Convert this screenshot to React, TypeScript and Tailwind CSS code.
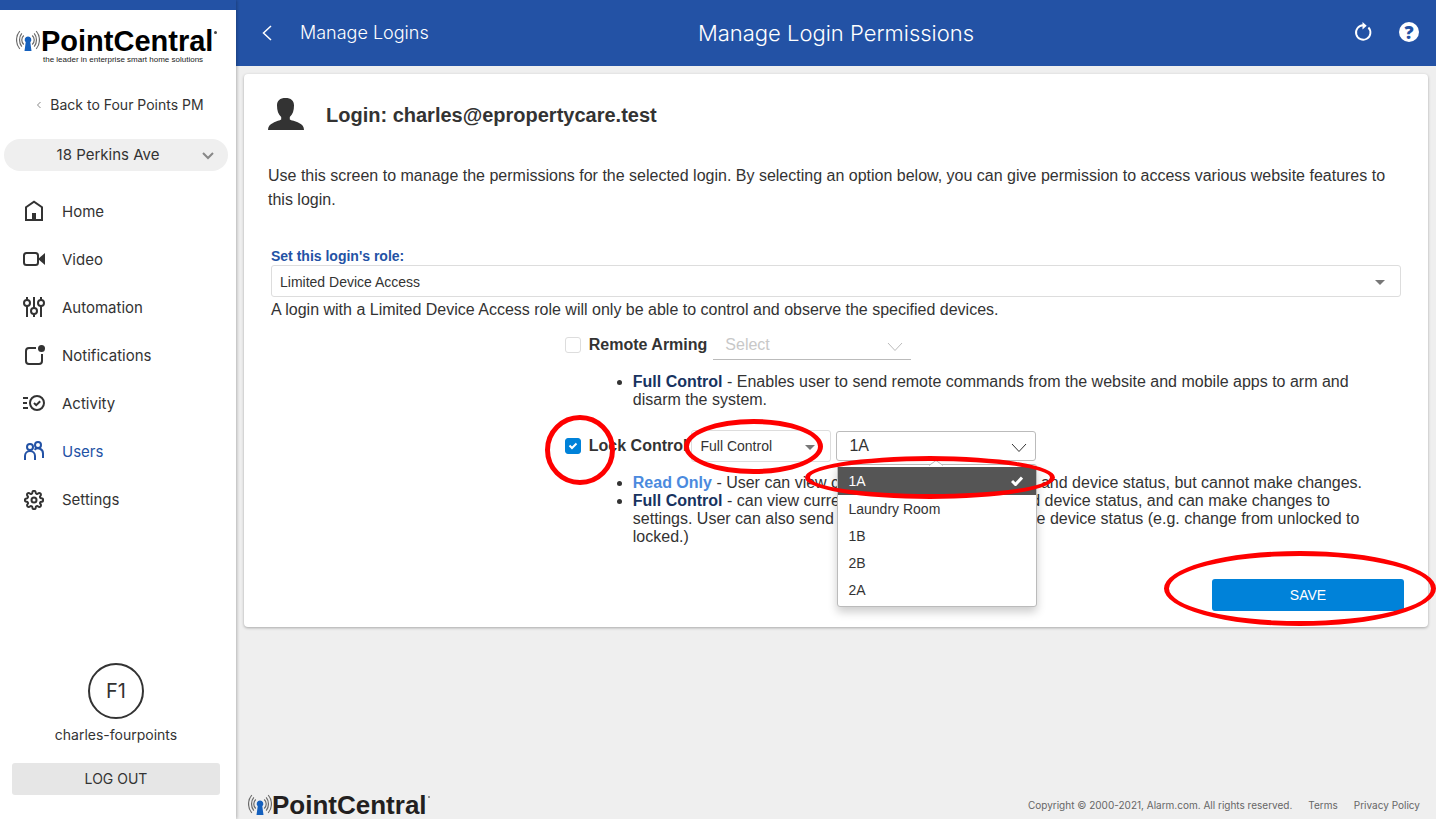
import type { ReactNode } from 'react'
import { FiSettings } from 'react-icons/fi'

const navItems = [
  { id: 'home', label: 'Home', icon: <HomeIcon /> },
  { id: 'video', label: 'Video', icon: <VideoIcon /> },
  { id: 'automation', label: 'Automation', icon: <AutomationIcon /> },
  { id: 'notifications', label: 'Notifications', icon: <NotificationsIcon /> },
  { id: 'activity', label: 'Activity', icon: <ActivityIcon /> },
  { id: 'users', label: 'Users', icon: <UsersIcon /> },
  { id: 'settings', label: 'Settings', icon: <FiSettings className="w-5 h-5" strokeWidth={2.4} /> },
]

const locks = ['1A', 'Laundry Room', '1B', '2B', '2A']

function NavSvg({ children }: { children: ReactNode }) {
  return (
    <svg viewBox="0 0 24 24" className="w-6 h-6" fill="none" stroke="currentColor" strokeWidth="2" aria-hidden="true">
      {children}
    </svg>
  )
}

function HomeIcon() {
  return (
    <NavSvg>
      <path d="M4 7.3 12 1.8l8 5.5V20H4z" />
      <path d="M10 13h4v7h-4z" fill="currentColor" stroke="none" />
    </NavSvg>
  )
}

function VideoIcon() {
  return (
    <NavSvg>
      <rect x="2" y="5" width="14" height="12" rx="2.5" />
      <path d="M16 11l7-6v12z" fill="currentColor" stroke="none" />
    </NavSvg>
  )
}

function AutomationIcon() {
  return (
    <NavSvg>
      <circle cx="5" cy="7" r="3" />
      <circle cx="12" cy="15" r="3" />
      <circle cx="19" cy="7" r="3" />
      <path d="M5 1v3M5 10v11M12 1v11M12 18v3M19 1v3M19 10v11" />
    </NavSvg>
  )
}

function NotificationsIcon() {
  return (
    <NavSvg>
      <path d="M14 4H7a3 3 0 0 0-3 3v10a3 3 0 0 0 3 3h10a3 3 0 0 0 3-3v-7" />
      <circle cx="19.5" cy="4.5" r="3.5" fill="currentColor" stroke="none" />
    </NavSvg>
  )
}

function ActivityIcon() {
  return (
    <NavSvg>
      <circle cx="15" cy="11" r="7" />
      <path d="M1 6h5M1 11h4M1 16h5M12 11l2.2 2.2 4-4" />
    </NavSvg>
  )
}

function UsersIcon() {
  return (
    <NavSvg>
      <circle cx="8" cy="7" r="3" />
      <circle cx="16" cy="5" r="3" />
      <path d="M3 20v-4a5 5 0 0 1 10 0v4M12.5 9.8A5 5 0 0 1 21 13.5V18" />
    </NavSvg>
  )
}

function SignalMark({ className }: { className: string }) {
  return (
    <svg viewBox="0 0 24 22" className={className} fill="none" aria-hidden="true">
      <g stroke="#6a6a6a" strokeWidth="1.2">
        <path d="M7.800 5.500a6 6 0 0 0 0 9M16.200 5.500a6 6 0 0 1 0 9" />
        <path d="M5.800 3.300c-3 3.600-3 9.800 0 13.400M18.200 3.300c3 3.600 3 9.800 0 13.400" />
        <path d="M3.800 1.200c-4.300 4.900-4.300 12.700 0 17.600M20.200 1.200c4.300 4.900 4.300 12.700 0 17.600" />
      </g>
      <path d="M12 6.500a3.300 3.300 0 0 1 2.300 5.700L15.500 21h-7l1.200-8.800A3.300 3.300 0 0 1 12 6.500z" fill="#1560bd" />
    </svg>
  )
}

// hand-drawn style markers that sit over the controls
function Marker({ className }: { className: string }) {
  return (
    <span
      aria-hidden="true"
      className={`absolute z-30 rounded-[50%] border-[#fe0000] pointer-events-none ${className}`}
    />
  )
}

function Caret() {
  return (
    <svg viewBox="0 0 10 5" className="absolute right-4 top-[15px] w-[10px] h-[5px] pointer-events-none" aria-hidden="true">
      <path d="M0 0h10L5 5z" fill="#777" />
    </svg>
  )
}

function Chevron({ className }: { className: string }) {
  return (
    <svg viewBox="0 0 16 10" className={className} fill="none" stroke="currentColor" aria-hidden="true">
      <path d="M1 1l7 7.500L15 1" />
    </svg>
  )
}

function Sidebar() {
  return (
    <aside className="relative z-10 flex flex-col w-[236px] shrink-0 bg-white border-t-10 border-[#2352a5] pr-1 pb-6 shadow-[1px_0_3px_rgba(0,0,0,0.25)] font-['Inter',sans-serif]">
      <div className="pl-4 pt-[15px]">
        <div className="flex items-start gap-px h-[30px]">
          <SignalMark className="w-6 h-[22px] mt-[5px]" />
          <span className="font-['Liberation_Sans',sans-serif] font-bold text-[29px] leading-8 text-black">
            PointCentral
          </span>
          <span className="w-[3px] h-[3px] mt-[6px] rounded-full bg-[#444]" />
        </div>
        <p className="pl-[27px] font-['Liberation_Sans',sans-serif] text-[8px] leading-[10px] text-[#222]">
          the leader in enterprise smart home solutions
        </p>
      </div>

      <a href="#back" className="flex items-center justify-center gap-2 mt-7 text-sm leading-6 text-[#333] pl-2">
        <svg viewBox="0 0 6 8" className="w-[6px] h-2" fill="none" stroke="#888" aria-hidden="true">
          <path d="M4.500 1L1.500 4l3 3" />
        </svg>
        Back to Four Points PM
      </a>

      <button className="relative mt-[22px] ml-1 h-8 rounded-full bg-[#efefef] w-56 pt-px pr-4 text-[15px] text-[#333]">
        18 Perkins Ave
        <svg viewBox="0 0 12 8" className="absolute right-[14px] top-[13px] w-3 h-2" fill="none" stroke="#888" strokeWidth="2" aria-hidden="true">
          <path d="M1 1l5 5 5-5" />
        </svg>
      </button>

      <nav className="mt-[17px]">
        {navItems.map((item) => (
          <a
            key={item.id}
            href={`#${item.id}`}
            className={`flex items-center gap-4 h-12 pl-[22px] text-[15px] ${
              item.id === 'users' ? 'text-[#2352a5]' : 'text-[#333]'
            }`}
          >
            <span className="flex items-center justify-center w-6 h-6">{item.icon}</span>
            {item.label}
          </a>
        ))}
      </nav>

      <div className="flex flex-col items-center mt-auto px-3 text-[#333]">
        <div className="flex items-center justify-center w-14 h-14 rounded-full border-2 border-[#333] text-xl">F1</div>
        <p className="mt-1 text-sm leading-6">charles-fourpoints</p>
        <button className="w-full h-8 mt-4 rounded-[3px] bg-[#e6e6e6] text-sm">LOG OUT</button>
      </div>
    </aside>
  )
}

function Header() {
  return (
    <header className="grid grid-cols-[1fr_auto_1fr] items-center h-[66px] px-4 bg-[#2352a5] text-white font-['Inter',sans-serif] font-light">
      <a href="#logins" className="flex items-center gap-7 pl-[10px] text-lg">
        <svg viewBox="0 0 10 16" className="w-[10px] h-4" fill="none" stroke="currentColor" strokeWidth="1.500" aria-hidden="true">
          <path d="M9 1L1.500 8 9 15" />
        </svg>
        Manage Logins
      </a>
      <h1 className="text-[22px]">Manage Login Permissions</h1>
      <div className="flex items-center justify-end gap-[26px] pr-px pb-[2px]">
        <button aria-label="Refresh">
          <svg viewBox="0 0 20 20" className="w-5 h-5" fill="none" aria-hidden="true">
            <path d="M10 3.300a7.200 7.200 0 1 0 5.400 2.200" stroke="#fff" strokeWidth="1.900" />
            <path d="M9.500 0l4.200 3.700-4.200 3.700z" fill="#fff" />
          </svg>
        </button>
        <button aria-label="Help" className="w-5 h-5 rounded-full bg-white text-[#2352a5] text-lg leading-5 font-extrabold font-['Open_Sans',sans-serif]">
          ?
        </button>
      </div>
    </header>
  )
}

function LockDropdown() {
  return (
    <div className="relative w-[200px] ml-[5px]">
      <button
        aria-haspopup="listbox"
        aria-expanded="true"
        aria-label="Lock"
        className="flex items-center justify-between w-full h-[30px] px-3 pr-2 border border-[#bbb] rounded-[3px] bg-white text-base"
      >
        1A
        <Chevron className="w-4 h-[10px] mt-1" />
      </button>
      <div className="absolute z-20 left-px top-[33px] w-[200px] pt-[2px] pb-[3px] bg-white border border-[#bbb] rounded-[3px] shadow-[0_5px_10px_rgba(0,0,0,0.2)]">
        <svg viewBox="0 0 14 6" className="absolute left-[91px] -top-[5px] w-[14px] h-[6px]" aria-hidden="true">
          <path d="M0 5.500L7 .5l7 5" fill="#fff" stroke="#bbb" />
        </svg>
        <ul role="listbox" aria-label="Locks" className="text-sm">
          {locks.map((lock, i) => (
            <li
              key={lock}
              role="option"
              aria-selected={i === 0}
              className={`flex items-center justify-between px-[10px] ${i === 0 ? 'h-7 bg-[#555] text-white' : 'h-[27px] text-[#333]'}`}
            >
              {lock}
              {i === 0 && (
                <svg viewBox="0 0 12 10" className="w-3 h-[10px] mr-[3px]" fill="none" stroke="#fff" strokeWidth="3" aria-hidden="true">
                  <path d="M1 5l3.500 3.500L11 1.500" />
                </svg>
              )}
            </li>
          ))}
        </ul>
      </div>
      <Marker className="-left-[31px] top-[25px] w-[250px] h-[43px] border-[5px]" />
    </div>
  )
}

function PermissionsCard() {
  return (
    <section className="mx-2 mt-2 px-6 pt-6 pb-4 bg-white rounded-[4px] shadow-[0_1px_3px_rgba(0,0,0,0.3)]">
      <div className="flex items-center gap-[22px]">
        <svg viewBox="0 0 36 32" className="w-9 h-8" fill="#333" aria-hidden="true">
          <path d="M17.500 0c5.500 0 8.500 2.500 8.500 7.500 0 5-1.300 9-4.200 11.400v2.600c1 .8 6 1.700 9.200 3.400 3.300 1.600 5 3.600 5 7.100H0c0-3.500 1.700-5.500 5-7.100 3.200-1.700 7.200-2.600 8.200-3.400v-2.600C10.300 16.500 9 12.500 9 7.500 9 2.500 12 0 17.500 0z" />
        </svg>
        <h2 className="pt-px text-xl font-bold">Login: charles@epropertycare.test</h2>
      </div>

      <p className="mt-[34px] leading-6">
        Use this screen to manage the permissions for the selected login. By selecting an option below, you can give
        permission to access various website features to this login.
      </p>

      <form className="px-[3px] mt-[35px]" onSubmit={(e) => e.preventDefault()}>
        <label htmlFor="role" className="block text-sm leading-[18px] font-bold text-[#2352a5]">
          Set this login's role:
        </label>
        <div className="relative">
          <select id="role" className="w-full h-8 px-2 pt-px appearance-none border border-[#ddd] rounded-[3px] bg-white text-sm">
            <option>Limited Device Access</option>
          </select>
          <Caret />
        </div>
        <p className="leading-[26px]">
          A login with a Limited Device Access role will only be able to control and observe the specified devices.
        </p>

        <div className="pl-[26%]">
          <div className="flex items-center mt-[7px] h-[30px]">
            <input
              type="checkbox"
              id="arming"
              className="w-4 h-4 appearance-none border border-[#ddd] rounded-[3px] bg-white"
            />
            <label htmlFor="arming" className="ml-2 font-bold">
              Remote Arming
            </label>
            <div className="relative w-[198px] ml-[6px] text-[#c8c8c8]">
              <select
                disabled
                aria-label="Remote arming access"
                className="block w-full h-[29px] px-3 appearance-none border-b border-[#bbb] bg-white text-base opacity-100"
              >
                <option>Select</option>
              </select>
              <Chevron className="absolute right-2 top-[11px] w-4 h-[10px] text-[#bbb] pointer-events-none" />
            </div>
          </div>

          <ul className="mt-[13px] pl-[68px] pr-3 list-disc leading-[18px]">
            <li>
              <b className="text-[#17335f]">Full Control</b> - Enables user to send remote commands from the website
              and mobile apps to arm and disarm the system.
            </li>
          </ul>

          <div className="flex items-center mt-[21px] h-8">
            <div className="relative w-4 h-4">
              <input
                type="checkbox"
                id="lock"
                defaultChecked
                className="peer block w-4 h-4 appearance-none border border-[#ddd] rounded-[3px] checked:bg-[#0082d9] checked:border-[#0082d9]"
              />
              <svg viewBox="0 0 16 16" className="absolute inset-0 hidden peer-checked:block pointer-events-none" fill="none" stroke="#fff" strokeWidth="2" aria-hidden="true">
                <path d="M4.500 7.500l2.500 2.500 4.500-4.500" />
              </svg>
              <Marker className="-left-5 -top-[23px] w-[70px] h-[70px] border-[5px]" />
            </div>
            <label htmlFor="lock" className="ml-2 font-bold">
              Lock Control
            </label>
            <div className="relative w-[140px] ml-1">
              <select
                aria-label="Lock control level"
                className="block w-full h-8 px-2 appearance-none border border-[#ddd] rounded-[3px] bg-white text-sm"
              >
                <option>Full Control</option>
                <option>Read Only</option>
              </select>
              <Caret />
              <Marker className="-left-[7px] -top-[11px] w-[139px] h-[55px] border-[5px]" />
            </div>
            <LockDropdown />
          </div>

          <ul className="mt-3 pl-[68px] pr-3 list-disc leading-[18px]">
            <li>
              <b className="text-[#4b8ade]">Read Only</b> - User can view current configuration settings and device
              status, but cannot make changes.
            </li>
            <li>
              <b className="text-[#17335f]">Full Control</b> - can view current configuration settings and device
              status, and can make changes to settings. User can also send commands which change the device status
              (e.g. change from unlocked to locked.)
            </li>
          </ul>
        </div>
      </form>

      <div className="flex justify-end mt-[33px]">
        <div className="relative">
          <button className="block w-48 h-8 rounded-[3px] bg-[#0082d9] text-white text-sm">SAVE</button>
          <Marker className="-left-12 -top-7 w-[272px] h-[75px] border-[5px]" />
        </div>
      </div>
    </section>
  )
}

function Footer() {
  return (
    <footer className="flex items-center justify-between mt-auto pl-3 pr-4 font-['Inter',sans-serif] text-[10px] text-[#666]">
      <div className="flex items-center">
        <SignalMark className="w-6 h-[22px]" />
        <span className="font-['Liberation_Sans',sans-serif] font-bold text-[26px] leading-7 text-[#231f20]">
          PointCentral
        </span>
        <span className="w-[2px] h-[2px] ml-px mb-4 rounded-full bg-[#777]" />
      </div>
      <div className="flex gap-4">
        <span>Copyright © 2000-2021, Alarm.com. All rights reserved.</span>
        <a href="#terms">Terms</a>
        <a href="#privacy">Privacy Policy</a>
      </div>
    </footer>
  )
}

export default function App() {
  return (
    <div className="flex min-h-screen overflow-x-hidden bg-[#efefef] text-[#333] font-['Liberation_Sans',sans-serif]">
      <Sidebar />
      <main className="flex flex-col flex-1 min-w-0">
        <Header />
        <PermissionsCard />
        <Footer />
      </main>
    </div>
  )
}
